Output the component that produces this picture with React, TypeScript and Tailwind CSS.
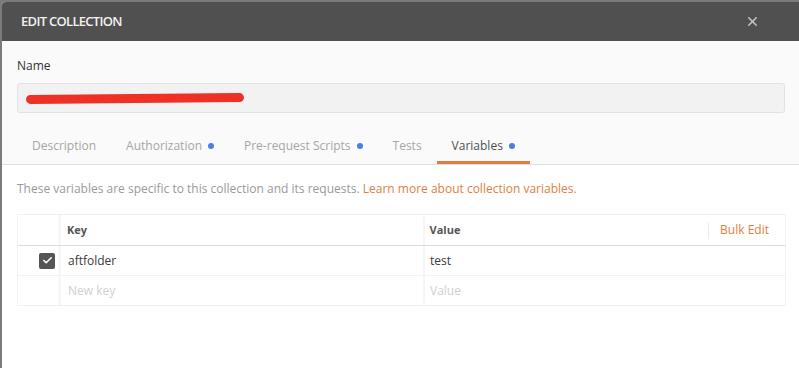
import { Check, X } from 'lucide-react';

const tabs = [
  { label: 'Description', dot: false },
  { label: 'Authorization', dot: true },
  { label: 'Pre-request Scripts', dot: true },
  { label: 'Tests', dot: false },
  { label: 'Variables', dot: true, active: true },
];

export default function App() {
  return (
    <div className="w-[799px] h-[368px] overflow-hidden bg-[#7b7b7b] pl-[2px] pt-[2px] font-['Open_Sans',sans-serif]">
      <div className="h-full rounded-tl-[4px] overflow-hidden bg-[#fafafa] flex flex-col">
        <div className="h-[39px] shrink-0 bg-[#505050] flex items-center justify-between pl-[19px] pr-[39px]">
          <span className="text-[13px] font-semibold text-[#f2f2f2] tracking-[-0.7px]">EDIT COLLECTION</span>
          <X className="w-[15px] h-[15px] text-[#c4c4c4]" strokeWidth={2.5} />
        </div>

        <div className="px-[15px] pt-[16px]">
          <div className="text-[12px] leading-[18px] text-[#333]">Name</div>
          <div className="mt-[8px] h-[30px] w-[768px] rounded-[3px] border border-[#e2e2e2] bg-[#f2f2f2] flex items-center pl-[8px]">
            <div className="h-[9px] w-[218px] rounded-full bg-[#ee3124] -rotate-[0.5deg]" />
          </div>
        </div>

        <div className="mt-[19px] h-[33px] shrink-0 border-b border-[#e0e0e0] flex pl-[15px]">
          {tabs.map((t) => (
            <div
              key={t.label}
              className={`relative px-[15px] flex items-start pt-[5px] text-[12px] ${
                t.active ? 'text-[#505050]' : 'text-[#a6a6a6]'
              }`}
            >
              <span>{t.label}</span>
              {t.dot && <span className="ml-[6px] mt-[6px] w-[6px] h-[6px] rounded-full bg-[#4a7fe0]" />}
              {t.active && <div className="absolute left-0 right-0 bottom-0 h-[3px] bg-[#dd7e3f]" />}
            </div>
          ))}
        </div>

        <div className="flex-1 bg-white px-[15px] pt-[15px]">
          <div className="text-[12px] leading-[18px] text-[#9a9a9a]">
            These variables are specific to this collection and its requests.{' '}
            <span className="text-[#e0803d]">Learn more about collection variables.</span>
          </div>

          <div className="mt-[16px] w-[769px] border border-[#f0f0f0]">
            <div className="flex h-[31px] border-b border-[#dcdcdc]">
              <div className="w-[40px] shrink-0" />
              <div className="w-[3px] shrink-0 bg-[#f7f7f7]" />
              <div className="flex-1 flex items-center pl-[6px] text-[11px] font-bold text-[#555]">Key</div>
              <div className="w-[2px] shrink-0 bg-[#f5f5f5]" />
              <div className="flex-1 flex items-center pl-[5px] text-[11px] font-bold text-[#555]">
                <span className="flex-1">Value</span>
                <span className="h-[17px] w-px bg-[#ededed]" />
                <span className="pl-[11px] pr-[16px] text-[12px] font-normal text-[#e0803d]">Bulk Edit</span>
              </div>
            </div>
            <div className="flex h-[30px] border-b border-[#f2f2f2]">
              <div className="w-[40px] shrink-0 flex items-center justify-end pr-[3px]">
                <span className="w-[16px] h-[16px] rounded-[2px] bg-[#555] flex items-center justify-center">
                  <Check className="w-[11px] h-[11px] text-white" strokeWidth={3.5} />
                </span>
              </div>
              <div className="w-[3px] shrink-0 bg-[#f7f7f7]" />
              <div className="flex-1 flex items-center pl-[7px] text-[12px] text-[#3a3a3a]">aftfolder</div>
              <div className="w-[2px] shrink-0 bg-[#f5f5f5]" />
              <div className="flex-1 flex items-center pl-[5px] text-[12px] text-[#3a3a3a]">test</div>
            </div>
            <div className="flex h-[29px]">
              <div className="w-[40px] shrink-0" />
              <div className="w-[3px] shrink-0 bg-[#f7f7f7]" />
              <div className="flex-1 flex items-center pl-[7px] text-[12px] text-[#cfcfcf]">New key</div>
              <div className="w-[2px] shrink-0 bg-[#f5f5f5]" />
              <div className="flex-1 flex items-center pl-[5px] text-[12px] text-[#cfcfcf]">Value</div>
            </div>
          </div>
        </div>
      </div>
    </div>
  );
}
